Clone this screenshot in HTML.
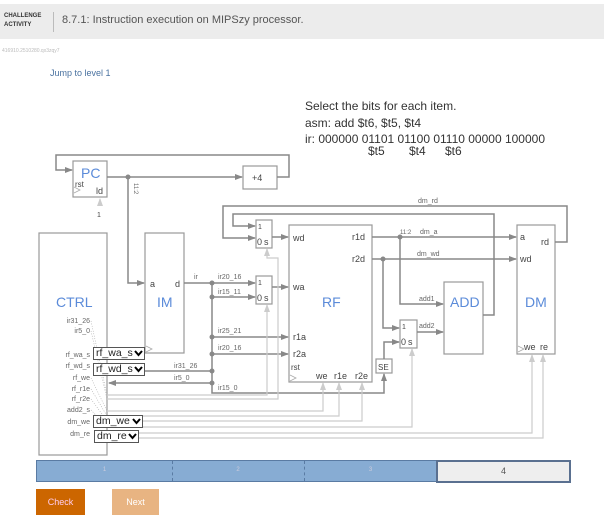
<!DOCTYPE html>
<html><head><style>
body{margin:0;width:604px;height:532px;background:#fff;overflow:hidden;font-family:"Liberation Sans",sans-serif}
.a{position:absolute}
.sel{position:absolute;border:1.5px solid #555;background:#fff;font-size:10.5px;color:#222;height:11px;line-height:11px;padding:0 2px;box-sizing:content-box;white-space:nowrap;overflow:hidden}
.sel svg{position:absolute;right:0;top:0;background:#fff;padding:2px 1px 2px 0}
</style></head><body>
<div class="a" style="left:0;top:4px;width:604px;height:35px;background:#ececec"></div>
<div class="a" style="left:4px;top:12px;font-size:6px;font-weight:bold;color:#333;line-height:9px">CHALLENGE<br>ACTIVITY</div>
<div class="a" style="left:53px;top:12px;width:1px;height:20px;background:#bbb"></div>
<div class="a" style="left:62px;top:14px;font-size:11px;color:#555">8.7.1: Instruction execution on MIPSzy processor.</div>
<div class="a" style="left:2px;top:48px;font-size:5px;color:#bbb">416910.2510280.qx3zqy7</div>
<div class="a" style="left:50px;top:68px;font-size:9px;color:#4a72a0">Jump to level 1</div>
<div class="a" style="left:305px;top:98px;font-size:12px;color:#333;line-height:16.5px">Select the bits for each item.<br>asm: add $t6, $t5, $t4<br>ir: 000000 01101 01100 01110 00000 100000</div>
<div class="a" style="left:368px;top:144px;font-size:12px;color:#333">$t5</div>
<div class="a" style="left:409px;top:144px;font-size:12px;color:#333">$t4</div>
<div class="a" style="left:445px;top:144px;font-size:12px;color:#333">$t6</div>

<svg class="a" style="left:0;top:0" width="604" height="532" font-family="Liberation Sans, sans-serif">
<defs>
<marker id="m" markerWidth="8" markerHeight="8" refX="7" refY="4" orient="auto" markerUnits="userSpaceOnUse"><path d="M0,1 L8,4 L0,7z" fill="#888"/></marker>
<marker id="l" markerWidth="8" markerHeight="8" refX="7" refY="4" orient="auto" markerUnits="userSpaceOnUse"><path d="M0,1 L8,4 L0,7z" fill="#ccc"/></marker>
</defs>
<g fill="none" stroke="#999" stroke-width="1.2">
<rect x="73" y="161" width="34" height="36"/>
<rect x="243" y="166" width="34" height="23"/>
<rect x="39" y="233" width="68" height="222"/>
<rect x="145" y="233" width="39" height="120"/>
<rect x="256" y="220" width="16" height="28"/>
<rect x="256" y="276" width="16" height="28"/>
<rect x="289" y="225" width="83" height="157"/>
<rect x="517" y="225" width="38" height="129"/>
<rect x="444" y="282" width="39" height="72"/>
<rect x="400" y="320" width="17" height="28"/>
<rect x="376" y="359" width="16" height="14"/>
</g>
<g fill="none" stroke="#888" stroke-width="1.5">
<path d="M277,177 H289 V155 H56 V170 H72" marker-end="url(#m)"/>
<path d="M107,177 H242" marker-end="url(#m)"/>
<path d="M128,177 V283 H144" marker-end="url(#m)"/>
<path d="M184,283 H255" marker-end="url(#m)"/>
<path d="M212,283 V393 H384 V374" marker-end="url(#m)"/>
<path d="M212,297 H255" marker-end="url(#m)"/>
<path d="M212,337 H288" marker-end="url(#m)"/>
<path d="M212,354 H288" marker-end="url(#m)"/>
<path d="M212,371 H143"/>
<path d="M212,383 H109" marker-end="url(#m)"/>
<path d="M555,242 H567 V206 H223 V238 H255" marker-end="url(#m)"/>
<path d="M483,315 H494 V214 H233 V226 H255" marker-end="url(#m)"/>
<path d="M272,237 H288" marker-end="url(#m)"/>
<path d="M272,287 H288" marker-end="url(#m)"/>
<path d="M372,237 H516" marker-end="url(#m)"/>
<path d="M372,259 H516" marker-end="url(#m)"/>
<path d="M400,237 V304 H443" marker-end="url(#m)"/>
<path d="M383,259 V328 H399" marker-end="url(#m)"/>
<path d="M384,359 V342 H399" marker-end="url(#m)"/>
<path d="M417,332 H443" marker-end="url(#m)"/>
</g>
<g fill="#888"><circle cx="128" cy="177" r="2.5"/><circle cx="212" cy="283" r="2.5"/><circle cx="212" cy="297" r="2.5"/><circle cx="212" cy="337" r="2.5"/><circle cx="212" cy="354" r="2.5"/><circle cx="212" cy="371" r="2.5"/><circle cx="212" cy="383" r="2.5"/><circle cx="400" cy="237" r="2.5"/><circle cx="383" cy="259" r="2.5"/></g>
<g fill="none" stroke="#ccc" stroke-width="1.2">
<path d="M100,206 V199" marker-end="url(#l)"/>
<path d="M107,399 H278 V258 H267 V249" marker-end="url(#l)"/>
<path d="M107,395 H267 V305" marker-end="url(#l)"/>
<path d="M107,411 H323 V383" marker-end="url(#l)"/>
<path d="M107,416 H339 V383" marker-end="url(#l)"/>
<path d="M107,421 H362 V383" marker-end="url(#l)"/>
<path d="M107,427 H412 V349" marker-end="url(#l)"/>
<path d="M107,433 H532 V355" marker-end="url(#l)"/>
<path d="M107,438 H543 V355" marker-end="url(#l)"/>
</g>
<g stroke="#aaa" stroke-width="0.6" stroke-dasharray="1,1.5" fill="none">
<path d="M91,321 L107,395 M91,331 L107,399 M91,378 L107,411 M91,389 L107,416 M91,399 L107,421 M91,410 L107,427"/>
</g>
<g fill="#5b8bd9" font-size="14"><text x="81" y="178">PC</text><text x="56" y="307">CTRL</text><text x="157" y="307">IM</text><text x="322" y="307">RF</text><text x="450" y="307">ADD</text><text x="525" y="307">DM</text></g>
<g fill="#444" font-size="9">
<text x="252" y="181">+4</text>
<text x="75" y="187" font-size="8">rst</text><text x="96" y="194">ld</text>
<text x="97" y="217" font-size="7">1</text>
<text x="150" y="287">a</text><text x="175" y="287">d</text>
<text x="293" y="241">wd</text><text x="293" y="290">wa</text><text x="293" y="340">r1a</text><text x="293" y="357">r2a</text>
<text x="291" y="370" font-size="8">rst</text>
<text x="316" y="379">we</text><text x="334" y="379">r1e</text><text x="355" y="379">r2e</text>
<text x="352" y="240">r1d</text><text x="352" y="262">r2d</text>
<text x="520" y="240">a</text><text x="541" y="245">rd</text><text x="520" y="262">wd</text>
<text x="524" y="350">we</text><text x="540" y="350">re</text>
<text x="378" y="370" font-size="8">SE</text>
<text x="258" y="229" font-size="7">1</text><text x="257" y="245">0</text><text x="264" y="245">s</text>
<text x="258" y="285" font-size="7">1</text><text x="257" y="301">0</text><text x="264" y="301">s</text>
<text x="402" y="329" font-size="7">1</text><text x="401" y="345">0</text><text x="408" y="345">s</text>
</g>
<g fill="#666" font-size="7">
<text x="194" y="279">ir</text><text x="218" y="279">ir20_16</text><text x="218" y="294">ir15_11</text><text x="218" y="333">ir25_21</text><text x="218" y="350">ir20_16</text>
<text x="174" y="368">ir31_26</text><text x="174" y="380">ir5_0</text><text x="218" y="390">ir15_0</text>
<text x="418" y="203">dm_rd</text><text x="400" y="234" font-size="6">11:2</text><text x="420" y="234">dm_a</text><text x="417" y="256">dm_wd</text>
<text x="419" y="301">add1</text><text x="419" y="328">add2</text>
<text x="134" y="183" font-size="6" transform="rotate(90 134 183)">11:2</text>
</g>
<g fill="#666" font-size="7" text-anchor="end">
<text x="90" y="323">ir31_26</text><text x="90" y="333">ir5_0</text><text x="90" y="357">rf_wa_s</text><text x="90" y="368">rf_wd_s</text><text x="90" y="380">rf_we</text><text x="90" y="391">rf_r1e</text><text x="90" y="401">rf_r2e</text><text x="90" y="412">add2_s</text><text x="90" y="424">dm_we</text><text x="90" y="436">dm_re</text>
</g>
<g fill="none" stroke="#aaa" stroke-width="0.8"><path d="M74,193 L80,190 L74,187"/><path d="M146,352 L152,349 L146,346"/><path d="M290,381 L296,378 L290,375"/><path d="M518,352 L524,349 L518,346"/></g>
</svg>

<div class="sel" style="left:93px;top:347px;width:46px">rf_wa_s<svg width="9" height="7"><path d="M1,1 L4.5,5 L8,1" stroke="#000" stroke-width="2" fill="none"/></svg></div>
<div class="sel" style="left:93px;top:363px;width:46px">rf_wd_s<svg width="9" height="7"><path d="M1,1 L4.5,5 L8,1" stroke="#000" stroke-width="2" fill="none"/></svg></div>
<div class="sel" style="left:93px;top:415px;width:44px">dm_we<svg width="9" height="7"><path d="M1,1 L4.5,5 L8,1" stroke="#000" stroke-width="2" fill="none"/></svg></div>
<div class="sel" style="left:94px;top:430px;width:39px">dm_re<svg width="9" height="7"><path d="M1,1 L4.5,5 L8,1" stroke="#000" stroke-width="2" fill="none"/></svg></div>

<div class="a" style="left:36px;top:460px;width:400px;height:20px;background:#87acd3;border:1px solid #5a7ba3;font-size:6px;color:#ccd">
<div class="a" style="left:0;width:135px;text-align:center;top:6px">1</div>
<div class="a" style="left:135px;top:0;height:20px;border-left:1px dashed #5a7ba3"></div>
<div class="a" style="left:135px;width:132px;text-align:center;top:6px">2</div>
<div class="a" style="left:267px;top:0;height:20px;border-left:1px dashed #5a7ba3"></div>
<div class="a" style="left:267px;width:133px;text-align:center;top:6px">3</div>
</div>
<div class="a" style="left:436px;top:460px;width:131px;height:19px;background:#eee;border:2px solid #5a7090;font-size:9px;color:#555;text-align:center;line-height:19px">4</div>
<div class="a" style="left:36px;top:489px;width:49px;height:26px;background:#cc6600;color:#fce;font-size:9px;text-align:center;line-height:26px">Check</div>
<div class="a" style="left:112px;top:489px;width:47px;height:26px;background:#e8b482;color:#fff;font-size:9px;text-align:center;line-height:26px">Next</div>
</body></html>
